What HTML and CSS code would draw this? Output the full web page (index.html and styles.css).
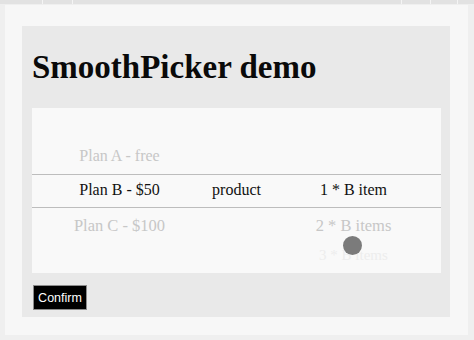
FILE: index.html
```html
<!DOCTYPE html>
<html>
<head>
<meta charset="utf-8">
<link rel="stylesheet" href="styles.css">
</head>
<body>
<div class="strip">
  <span class="seg s1"></span><span class="seg s2"></span><span class="seg s3"></span><span class="seg s4"></span><span class="seg s5"></span><span class="seg s6"></span>
</div>
<div class="card">
  <div class="panel">
    <h1 class="title">SmoothPicker demo</h1>
    <div class="picker">
      <div class="row row-empty"><span></span><span></span><span></span></div>
      <div class="row row-a"><span class="faded">Plan A - free</span><span></span><span></span></div>
      <div class="row row-sel"><span>Plan B - $50</span><span>product</span><span>1 * B item</span></div>
      <div class="row row-c"><span class="faded">Plan C - $100</span><span></span><span class="faded">2 * B items</span></div>
      <div class="row row-d"><span></span><span></span><span class="faint">3 * B items</span></div>
      <div class="dot"></div>
    </div>
    <button class="confirm">Confirm</button>
  </div>
</div>
</body>
</html>
```
FILE: styles.css
```css
html, body {
  margin: 0;
  padding: 0;
}
body {
  background: #efefef;
  width: 474px;
  height: 340px;
  overflow: hidden;
  font-family: "Liberation Serif", "Times New Roman", serif;
}
.strip {
  height: 4px;
  display: flex;
  background: #e2e2e2;
}
.seg {
  height: 4px;
  border-right: 1px solid #f4f4f4;
}
.s1 { width: 42px; }
.s2 { width: 29px; }
.s3 { width: 328px; }
.s4 { width: 28px; }
.s5 { width: 26px; }
.s6 { flex: 1; border-right: none; }
.card {
  margin: 1px 6px 0 5px;
  height: 330px;
  background: #f7f7f7;
  padding: 21px 18px 0 17px;
  box-sizing: border-box;
}
.panel {
  background: #e9e9e9;
  height: 291px;
  padding: 21px 9px 0 10px;
  box-sizing: border-box;
}
.title {
  margin: 0 0 21px 0;
  font-size: 33px;
  line-height: 40px;
  font-weight: bold;
  color: #0a0a0a;
}
.picker {
  position: relative;
  background: #f9f9f9;
  height: 165px;
  padding: 0 29px;
  overflow: hidden;
}
.row {
  display: grid;
  grid-template-columns: 117px 117px 117px;
  height: 33px;
  box-sizing: border-box;
  font-size: 16px;
  color: #111;
  text-align: center;
}
.row span {
  white-space: nowrap;
}
.row-empty { line-height: 33px; }
.row-a { line-height: 33px; }
.row-a span { position: relative; top: -2px; }
.row-sel {
  margin: 0 -29px;
  padding: 0 29px;
  height: 34px;
  border-top: 1px solid #bdbdbd;
  border-bottom: 1px solid #bdbdbd;
  line-height: 30px;
}
.row-c { line-height: 33px; height: 32px; font-size: 16.5px; }
.row-c span { position: relative; top: 1px; }
.row-d { line-height: 33px; font-size: 15px; }
.row-d span { position: relative; top: -1px; }
.faded { color: #c7c7c7; }
.faint { color: #ededed; }
.dot {
  position: absolute;
  left: 311px;
  top: 128px;
  width: 19px;
  height: 19px;
  border-radius: 50%;
  background: #7b7b7b;
}
.confirm {
  display: block;
  margin: 12px 0 0 1px;
  width: 54px;
  height: 25px;
  padding: 0;
  background: #000;
  color: #fff;
  border: 1px solid #8c8c8c;
  font-family: "Liberation Sans", Arial, sans-serif;
  font-size: 12.5px;
}
```
